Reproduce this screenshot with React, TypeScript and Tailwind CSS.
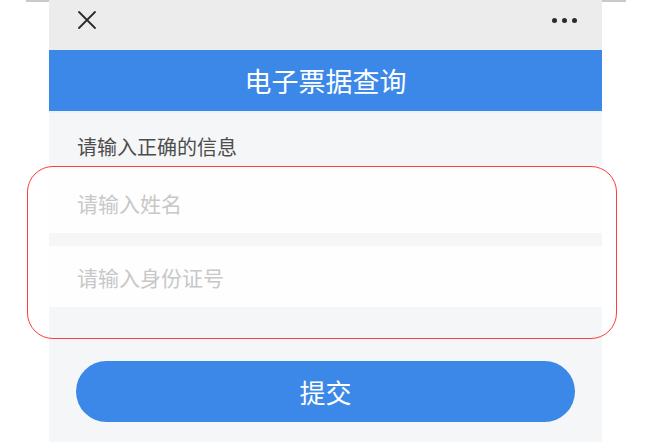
import React from 'react'

const App = () => {
  return (
    <div className="relative w-[652px] h-[442px] overflow-hidden bg-white" style={{ fontFamily: '"Noto Sans CJK SC", "Noto Sans", sans-serif' }}>
      <div className="grid grid-cols-[49px_553px_50px] h-full">
        <div>
          <div className="ml-[26px] h-[2px] bg-[#c9c9c9]" />
        </div>

        <div className="flex flex-col h-full bg-[#f5f6f7]">
          {/* top bar */}
          <div className="h-[50px] shrink-0 bg-[#ececec] flex items-center justify-between pl-[28px] pr-[25px] pb-[10px]">
            <svg width="20" height="20" viewBox="0 0 20 20" fill="none" stroke="#2b2b2b" strokeWidth={1.8} strokeLinecap="round">
              <path d="M2 2L18 18M18 2L2 18" />
            </svg>
            <div className="flex items-center gap-[5px]">
              <span className="w-[5px] h-[5px] rounded-full bg-[#2b2b2b]" />
              <span className="w-[5px] h-[5px] rounded-full bg-[#2b2b2b]" />
              <span className="w-[5px] h-[5px] rounded-full bg-[#2b2b2b]" />
            </div>
          </div>

          {/* title */}
          <div className="h-[61px] shrink-0 bg-[#3b88e8] flex items-center justify-center">
            <h1 className="text-white text-[27px] leading-none">电子票据查询</h1>
          </div>
          <div className="h-[2px] shrink-0 bg-[#eaf1f8]" />

          <p className="pl-[28px] pt-[24px] pb-[9px] text-[20px] leading-[20px] text-[#4d4d4d]">请输入正确的信息</p>

          <input
            className="h-[67px] shrink-0 bg-[#fefefe] pl-[28px] pt-[6px] text-[21px] outline-none placeholder:text-[#c8c8c8]"
            placeholder="请输入姓名"
          />
          <div className="h-[13px] shrink-0" />
          <input
            className="h-[61px] shrink-0 bg-[#fefefe] pl-[28px] text-[21px] outline-none placeholder:text-[#c8c8c8]"
            placeholder="请输入身份证号"
          />

          <div className="px-[27px] pt-[54px]">
            <button className="w-full h-[61px] rounded-full bg-[#3b88e8] text-white text-[26px] leading-none">提交</button>
          </div>
        </div>

        <div>
          <div className="w-[24px] h-[2px] bg-[#c9c9c9]" />
        </div>
      </div>

      {/* annotation box */}
      <div className="absolute left-[27px] top-[166px] w-[590px] h-[173px] rounded-[26px] border-[1.5px] border-[#ff3b3b] pointer-events-none" />
    </div>
  )
}

export default App
